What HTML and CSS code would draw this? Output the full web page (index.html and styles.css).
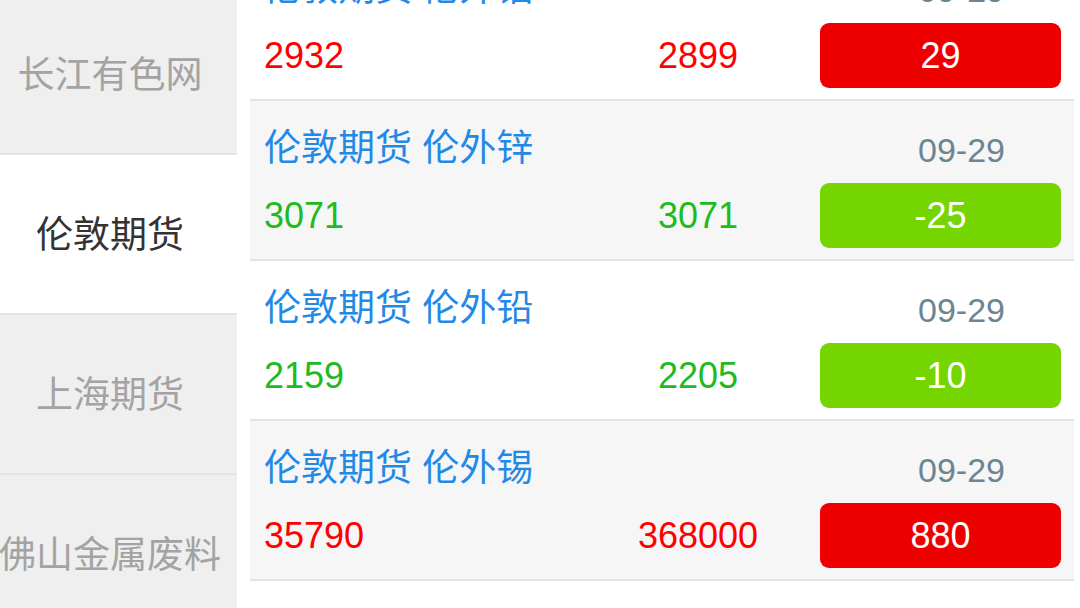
FILE: index.html
```html
<!DOCTYPE html>
<html lang="zh-CN">
<head>
<meta charset="utf-8">
<title>行情</title>
<link rel="stylesheet" href="styles.css">
</head>
<body>
<div class="app">
  <nav class="side">
    <div class="side-item">长江有色网</div>
    <div class="side-item active">伦敦期货</div>
    <div class="side-item">上海期货</div>
    <div class="side-item">佛山金属废料</div>
  </nav>
  <div class="list">
    <div class="row">
      <div class="title">伦敦期货 伦外铝</div>
      <div class="date">09-29</div>
      <div class="num up">2932</div>
      <div class="num2 up">2899</div>
      <div class="badge red">29</div>
    </div>
    <div class="row alt">
      <div class="title">伦敦期货 伦外锌</div>
      <div class="date">09-29</div>
      <div class="num down">3071</div>
      <div class="num2 down">3071</div>
      <div class="badge green">-25</div>
    </div>
    <div class="row">
      <div class="title">伦敦期货 伦外铅</div>
      <div class="date">09-29</div>
      <div class="num down">2159</div>
      <div class="num2 down">2205</div>
      <div class="badge green">-10</div>
    </div>
    <div class="row alt">
      <div class="title">伦敦期货 伦外锡</div>
      <div class="date">09-29</div>
      <div class="num up">35790</div>
      <div class="num2 up">368000</div>
      <div class="badge red">880</div>
    </div>
  </div>
</div>
</body>
</html>
```
FILE: styles.css
```css
html, body {
  margin: 0;
  padding: 0;
  background: #ffffff;
  overflow: hidden;
}
body {
  width: 1080px;
  height: 608px;
  font-family: "Liberation Sans", "Noto Sans CJK SC", sans-serif;
}
.app {
  display: flex;
  align-items: flex-start;
  gap: 13px;
  height: 608px;
}
.side {
  width: 237px;
  flex: none;
  background: #efefef;
  margin-top: -5px;
  display: flex;
  flex-direction: column;
  min-height: 620px;
}
.side-item {
  height: 153px;
  border-bottom: 2px solid #e4e4e4;
  display: flex;
  align-items: center;
  justify-content: center;
  padding-right: 17px;
  padding-bottom: 5px;
  font-size: 37px;
  color: #a3a3a3;
  white-space: nowrap;
}
.side-item.active {
  background: #ffffff;
  color: #333333;
}
.list {
  width: 824px;
  flex: none;
  margin-top: -59px;
}
.row {
  height: 160px;
  box-sizing: border-box;
  border-bottom: 2px solid #e0e5e8;
  padding: 22px 13px 0 14px;
  display: grid;
  grid-template-columns: 312px 200px 241px;
  grid-template-rows: 50px 65px;
  column-gap: 22px;
  row-gap: 10px;
  background: #ffffff;
}
.row.alt {
  background: #f6f6f6;
}
.title {
  grid-column: 1 / 3;
  font-size: 37px;
  line-height: 52px;
  color: #2389e6;
  white-space: nowrap;
}
.date {
  grid-column: 3;
  font-size: 34px;
  line-height: 54px;
  color: #6b8593;
  text-align: right;
  padding-right: 56px;
}
.num, .num2 {
  font-size: 36px;
  line-height: 65px;
}
.num2 {
  text-align: center;
}
.up { color: #ff0000; }
.down { color: #1ebb1e; }
.badge {
  border-radius: 9px;
  color: #ffffff;
  font-size: 36px;
  line-height: 65px;
  text-align: center;
}
.badge.red { background: #ee0000; }
.badge.green { background: #75d500; }
```
